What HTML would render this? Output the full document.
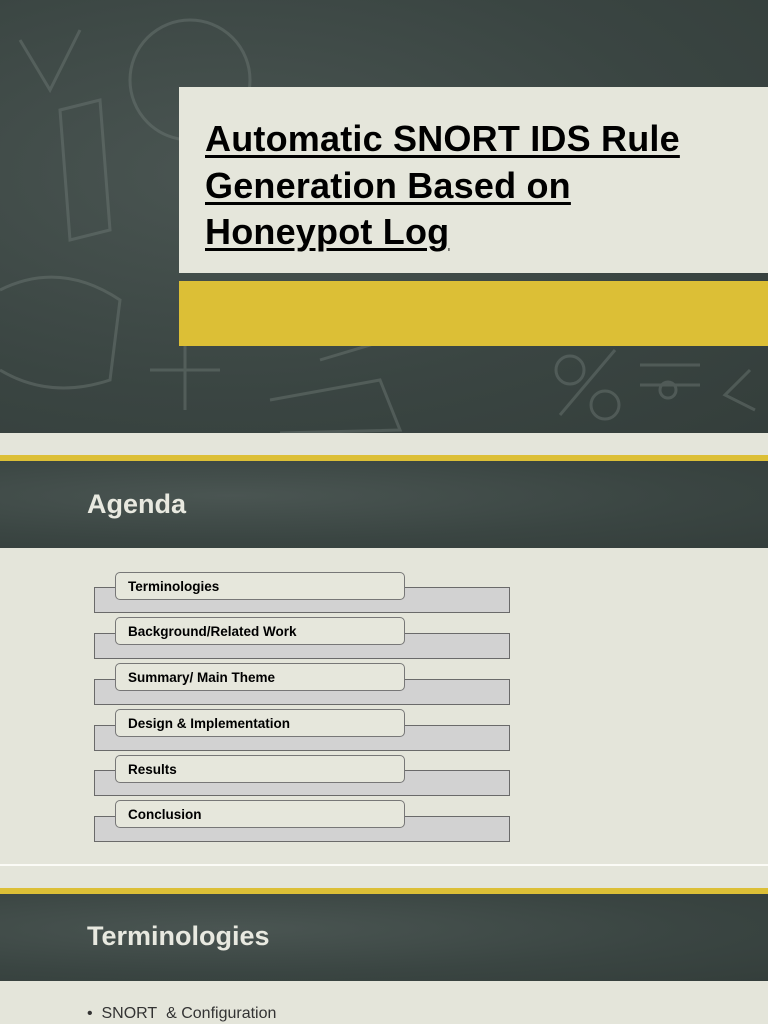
<!DOCTYPE html>
<html><head><style>
html,body{margin:0;padding:0;width:768px;height:1024px;overflow:hidden;background:#e4e5da;font-family:"Liberation Sans",sans-serif;}
.abs{position:absolute;}
.dark{background:#3c4744;background-image:radial-gradient(ellipse at 30% 40%,#4a5552 0%,#3a4542 60%,#343e3b 100%);}
.t{font-weight:bold;text-decoration:underline;text-decoration-thickness:3px;text-underline-offset:4px;color:#000;font-size:36px;letter-spacing:0.2px;line-height:46.5px;}
.bar{position:absolute;left:94px;width:414px;height:24px;background:#d2d2d2;border:1px solid #6a6a6a;}
.box{position:absolute;left:115px;width:290px;height:28px;background:#e6e7dc;border:1.5px solid #777;border-radius:5px;font-weight:bold;font-size:13.5px;line-height:27px;padding-left:12px;box-sizing:border-box;}
.h{color:#e8e9e0;font-size:27px;font-weight:bold;}
</style></head><body>
<div class="abs dark" style="left:0;top:0;width:768px;height:433px;">
<svg width="768" height="433" style="position:absolute;left:0;top:0" fill="none" stroke="#6f7a76" stroke-width="3" opacity="0.45">
<circle cx="190" cy="80" r="60"/>
<path d="M20 40 L50 90 L80 30"/>
<path d="M60 110 L100 100 L110 230 L70 240 Z"/>
<path d="M0 290 Q60 260 120 300 L110 380 Q50 400 0 370"/>
<path d="M150 370 h70 M185 340 v70"/>
<path d="M270 400 L380 380 L400 430 L280 433"/>
<path d="M320 360 L420 330"/>
<circle cx="570" cy="370" r="14"/><circle cx="605" cy="405" r="14"/><path d="M560 415 L615 350"/>
<path d="M640 365 h60 M640 385 h60"/>
<circle cx="668" cy="390" r="8"/>
<path d="M750 370 L725 395 L755 410"/>
</svg>
</div>
<div class="abs" style="left:179px;top:87px;width:589px;height:186px;background:#e5e6db;"></div>
<div class="abs" style="left:179px;top:281px;width:589px;height:65px;background:#dcbf36;"></div>
<div class="abs t" style="left:205px;top:116px;">Automatic SNORT IDS Rule<br>Generation Based on<br>Honeypot Log</div>

<div class="abs" style="left:0;top:455px;width:768px;height:6px;background:#dcbf36;"></div>
<div class="abs dark" style="left:0;top:461px;width:768px;height:87px;"></div>
<div class="abs h" style="left:87px;top:489px;">Agenda</div>

<div class="bar" style="top:587px"></div><div class="box" style="top:572px">Terminologies</div>
<div class="bar" style="top:633px"></div><div class="box" style="top:617px">Background/Related Work</div>
<div class="bar" style="top:679px"></div><div class="box" style="top:663px">Summary/ Main Theme</div>
<div class="bar" style="top:725px"></div><div class="box" style="top:709px">Design &amp; Implementation</div>
<div class="bar" style="top:770px"></div><div class="box" style="top:755px">Results</div>
<div class="bar" style="top:816px"></div><div class="box" style="top:800px">Conclusion</div>

<div class="abs" style="left:0;top:864px;width:768px;height:2px;background:#fbfbf6;"></div>
<div class="abs" style="left:0;top:888px;width:768px;height:6px;background:#dcbf36;"></div>
<div class="abs dark" style="left:0;top:894px;width:768px;height:87px;"></div>
<div class="abs h" style="left:87px;top:921px;">Terminologies</div>
<div class="abs" style="left:87px;top:1005px;font-size:16px;color:#333;">•&nbsp; SNORT&nbsp; &amp; Configuration</div>
</body></html>
